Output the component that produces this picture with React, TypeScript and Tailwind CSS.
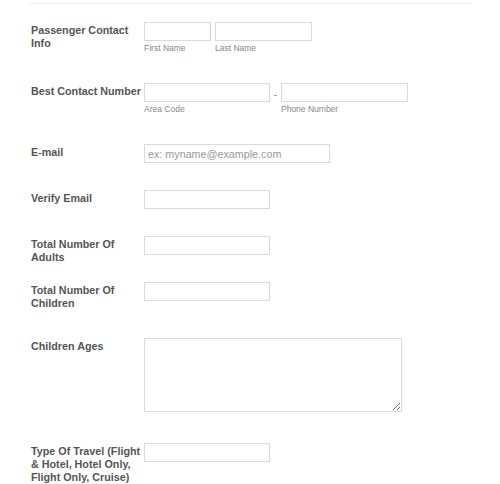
import React from 'react'

const labelCls =
  'w-[115px] shrink-0 pl-[2px] pt-[2px] pr-[2px] text-[10.75px] leading-[13px] font-bold text-[#555]'
const inputCls =
  'block h-[19px] border border-[#dadada] bg-white px-[3px] text-[10.75px] text-[#555] outline-none placeholder:text-[#999]'
const subCls = 'mt-[2px] text-[8.5px] leading-[10px] text-[#888]'

function Row({
  label,
  height,
  children,
}: {
  label: string
  height: string
  children: React.ReactNode
}) {
  return (
    <div className={`flex ${height}`}>
      <div className={labelCls}>{label}</div>
      <div className="flex-1">{children}</div>
    </div>
  )
}

export default function App() {
  return (
    <main
      className="min-h-screen bg-white pl-[29px] pr-[28px] pt-[3px]"
      style={{ fontFamily: '"Liberation Sans", Arial, sans-serif' }}
    >
      <div className="h-px bg-[#ebebeb]" />

      <div className="mt-[18px]">
        {/* Passenger contact */}
        <Row label="Passenger Contact Info" height="h-[61px]">
          <div className="flex gap-[4px]">
            <div className="w-[67px]">
              <input className={`${inputCls} w-full`} />
              <p className={subCls}>First Name</p>
            </div>
            <div className="w-[97px]">
              <input className={`${inputCls} w-full`} />
              <p className={subCls}>Last Name</p>
            </div>
          </div>
        </Row>

        {/* Phone */}
        <Row label="Best Contact Number" height="h-[61px]">
          <div className="flex">
            <div className="w-[126px]">
              <input className={`${inputCls} w-full`} />
              <p className={subCls}>Area Code</p>
            </div>
            <span className="w-[11px] pt-[5px] text-center text-[10px] leading-[13px] text-[#888]">
              -
            </span>
            <div className="w-[127px]">
              <input className={`${inputCls} w-full`} />
              <p className={subCls}>Phone Number</p>
            </div>
          </div>
        </Row>

        <Row label="E-mail" height="h-[46px]">
          <input
            className={`${inputCls} w-[186px]`}
            placeholder="ex: myname@example.com"
          />
        </Row>

        <Row label="Verify Email" height="h-[46px]">
          <input className={`${inputCls} w-[126px]`} />
        </Row>

        <Row label="Total Number Of Adults" height="h-[46px]">
          <input className={`${inputCls} w-[126px]`} />
        </Row>

        <Row label="Total Number Of Children" height="h-[56px]">
          <input className={`${inputCls} w-[126px]`} />
        </Row>

        <Row label="Children Ages" height="h-[105px]">
          <textarea className="block h-[74px] w-[258px] border border-[#dadada] bg-white p-[3px] text-[10.75px] text-[#555] outline-none" />
        </Row>

        <Row label="Type Of Travel (Flight & Hotel, Hotel Only, Flight Only, Cruise)" height="h-[48px]">
          <input className={`${inputCls} w-[126px]`} />
        </Row>
      </div>
    </main>
  )
}
